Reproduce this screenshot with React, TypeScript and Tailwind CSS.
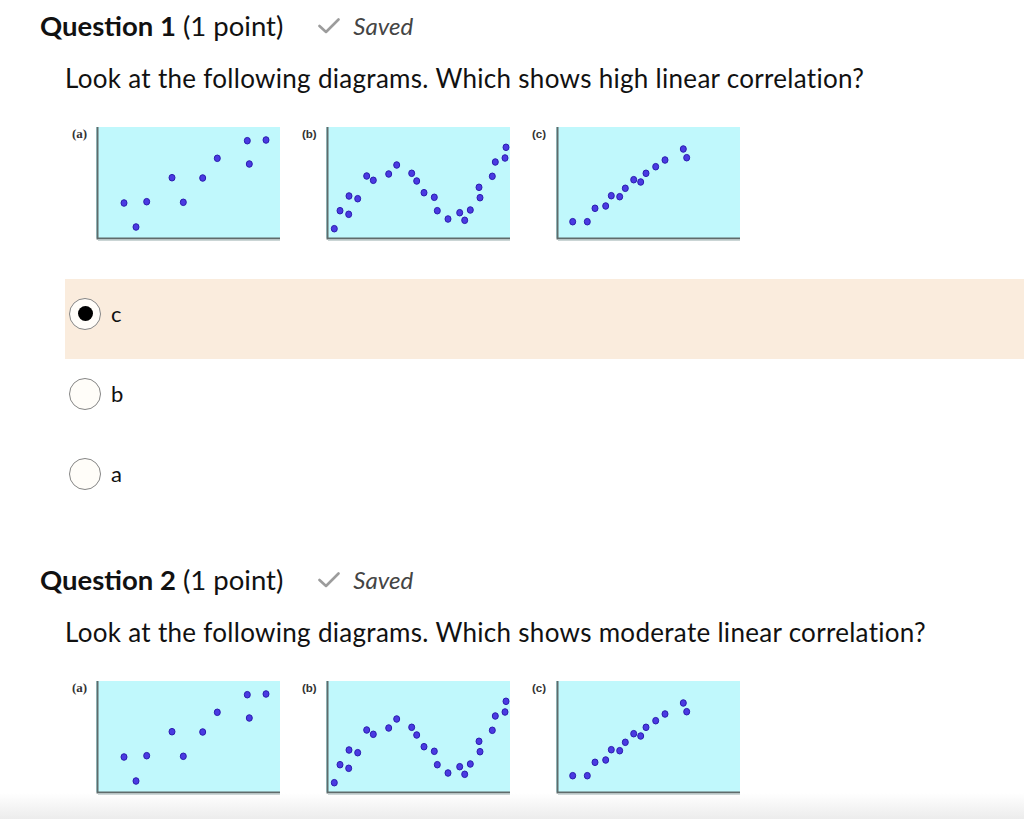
import React from "react";

type Pt = [number, number];

// dot positions, measured from the top-left corner of each plot area
const dotsA: Pt[] = [
  [28, 76], [40, 100], [50.7, 74.7], [76, 50.7], [87.3, 75.3],
  [106.7, 51], [121.3, 31.3], [151.3, 13.7], [170, 13], [153.3, 37],
];

const dotsB: Pt[] = [
  [8.3, 101.7], [14, 83.7], [22.7, 87.3], [23, 69], [31.7, 71.7],
  [40.7, 49], [47.3, 53.3], [62.7, 47], [70.7, 38], [85.7, 46.3],
  [90.7, 54], [98, 65.7], [108.3, 70.3], [111.3, 83.7], [122, 92],
  [133.7, 85.7], [138.7, 93.3], [144.3, 83], [153, 60.3], [154, 70.7],
  [166.3, 49.3], [169.3, 35], [179, 31], [180, 20.3],
];

const dotsC: Pt[] = [
  [16.7, 94.7], [31.3, 94.7], [39, 81.3], [49.7, 79], [55.3, 68.7],
  [63.7, 69.7], [69.3, 61.3], [77.7, 52.7], [84.7, 55], [90, 46.3],
  [99.7, 39.7], [109, 33], [127.3, 22], [130.7, 30.7],
];

const figures = [
  { label: "(a)", serif: true, dots: dotsA },
  { label: "(b)", serif: false, dots: dotsB },
  { label: "(c)", serif: false, dots: dotsC },
];

const Scatter = ({ label, serif, dots }: { label: string; serif: boolean; dots: Pt[] }) => (
  <svg width="208" height="114" viewBox="0 0 208 114">
    <text
      x="0"
      y="11"
      fontSize={serif ? 13 : 11.5}
      fontWeight="700"
      fill="#333"
      fontFamily={serif ? "Liberation Serif, serif" : "Liberation Sans, sans-serif"}
    >
      {label}
    </text>
    <rect x="24" y="0" width="184" height="111" fill="#c0f8fc" />
    <path d="M25.5 0 V111.5 H208" fill="none" stroke="#5f6b6b" strokeWidth="2" />
    <path d="M26 113 H208" stroke="#b9c7c7" strokeWidth="1.5" />
    {dots.map(([x, y], i) => (
      <ellipse key={i} cx={x + 24} cy={y} rx="3" ry="3.3" fill="#4a3ae2" stroke="#2b1cb0" strokeWidth="1" />
    ))}
  </svg>
);

const Check = () => (
  <svg width="22" height="16" viewBox="0 0 22 16" className="shrink-0">
    <path d="M1.5 8 L8 14 L20.5 1.5" fill="none" stroke="#9c9c9c" strokeWidth="2.6" strokeLinecap="round" strokeLinejoin="round" />
  </svg>
);

const Radio = ({ label, checked }: { label: string; checked?: boolean }) => (
  <div className={`h-[80px] flex items-center pl-[4px] pb-[11px] ${checked ? "bg-[#faecdd]" : ""}`}>
    <span className="w-[32px] h-[32px] rounded-full border-[1.5px] border-[#858585] bg-[#fffdf9] flex items-center justify-center shrink-0">
      {checked && <span className="w-[15px] h-[15px] rounded-full bg-black" />}
    </span>
    <span className="ml-[10px] text-[22px] leading-none text-[#111]">{label}</span>
  </div>
);

const Question = ({ num, prompt, withOptions }: { num: number; prompt: string; withOptions?: boolean }) => (
  <section className="flex flex-col">
    <div className="h-[32px] flex items-center pl-[40px]">
      <h2 className="text-[27.5px] leading-[32px] text-[#111]">
        <span className="font-bold">Question {num}</span> (1 point)
      </h2>
      <div className="flex items-center ml-[35px] gap-[13px]">
        <Check />
        <span className="italic text-[24px] text-[#444]">Saved</span>
      </div>
    </div>
    <p className="mt-[20px] pl-[65px] text-[26px] tracking-[0.3px] leading-[32px] text-[#111]">{prompt}</p>
    <div className="mt-[33px] pl-[72px] flex gap-[22px]">
      {figures.map((f) => (
        <Scatter key={f.label} {...f} />
      ))}
    </div>
    {withOptions && (
      <div className="mt-[38px] ml-[65px] flex flex-col">
        <Radio label="c" checked />
        <Radio label="b" />
        <Radio label="a" />
      </div>
    )}
  </section>
);

export default function App() {
  return (
    <main className="relative h-[819px] overflow-hidden bg-white font-['Lato',sans-serif] pt-[10px]">
      <Question
        num={1}
        prompt="Look at the following diagrams. Which shows high linear correlation?"
        withOptions
      />
      <div className="mt-[45px]">
        <Question num={2} prompt="Look at the following diagrams. Which shows moderate linear correlation?" />
      </div>
      <div className="absolute bottom-0 inset-x-0 h-[26px] bg-linear-to-b from-white/0 to-[#ececec]" />
    </main>
  );
}
